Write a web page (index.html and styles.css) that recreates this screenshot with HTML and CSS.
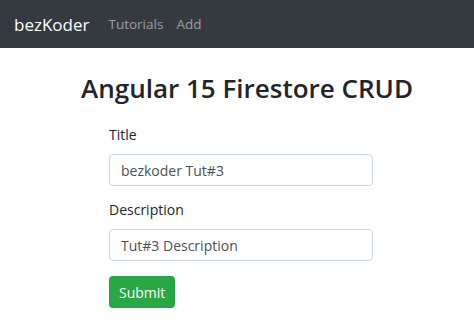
FILE: index.html
```html
<!DOCTYPE html>
<html lang="en">

<head>
	<meta charset="UTF-8">
	<meta name="viewport" content="width=device-width, initial-scale=1.0">
	<title>Angular 15 Firestore CRUD</title>
	<link rel="stylesheet" href="styles.css">
</head>

<body>
	<!-- Navbar -->
	<nav class="navbar">
		<a href="#" class="navbar-brand">bezKoder</a>
		<div class="navbar-nav">
			<a href="#" class="nav-link">Tutorials</a>
			<a href="#" class="nav-link">Add</a>
		</div>
	</nav>

	<div class="container">
		<h1 class="title">Angular 15 Firestore CRUD</h1>

		<div class="submit-form">
			<div class="form-group">
				<label for="title">Title</label>
				<input type="text" class="form-control" id="title" value="bezkoder Tut#3" name="title">
			</div>

			<div class="form-group">
				<label for="description">Description</label>
				<input type="text" class="form-control" id="description" value="Tut#3 Description" name="description">
			</div>

			<button class="btn-success">Submit</button>
		</div>
	</div>
</body>

</html>
```

FILE: styles.css
```css
body {
	font-family: "Open Sans", sans-serif;
	background-color: #fff;
	color: #212529;
	margin: 0;
	padding: 0;
}

/* Navbar */
.navbar {
	height: 48px;
	background-color: #343a40;
	display: flex;
	align-items: center;
	padding: 0 14px;
	box-sizing: border-box;
}

.navbar-brand {
	font-size: 17px;
	color: #fff;
	text-decoration: none;
	margin-right: 19px;
}

.navbar-nav {
	display: flex;
	gap: 13px;
}

.nav-link {
	font-size: 13.5px;
	color: rgba(255, 255, 255, 0.5);
	text-decoration: none;
}

.container {
	padding-top: 25px;
}

.title {
	text-align: center;
	font-size: 26px;
	font-weight: 600;
	margin: 0 0 21px 20px;
	line-height: 1.2;
}

.submit-form {
	width: 264px;
	margin-left: 109px;
}

.form-group {
	margin-bottom: 14px;
}

.form-group:last-of-type {
	margin-bottom: 15px;
}

label {
	display: block;
	font-size: 14px;
	margin-bottom: 10px;
}

.form-control {
	display: block;
	width: 100%;
	height: 32px;
	box-sizing: border-box;
	padding: 5px 11px;
	font-family: "Open Sans", sans-serif;
	font-size: 14px;
	color: #495057;
	border: 1px solid #ced4da;
	border-radius: 4px;
	outline: none;
}

.btn-success {
	height: 32px;
	padding: 0 10px;
	background-color: #28a745;
	color: #fff;
	border: none;
	border-radius: 4px;
	font-family: "Open Sans", sans-serif;
	font-size: 14px;
	cursor: pointer;
}
```
